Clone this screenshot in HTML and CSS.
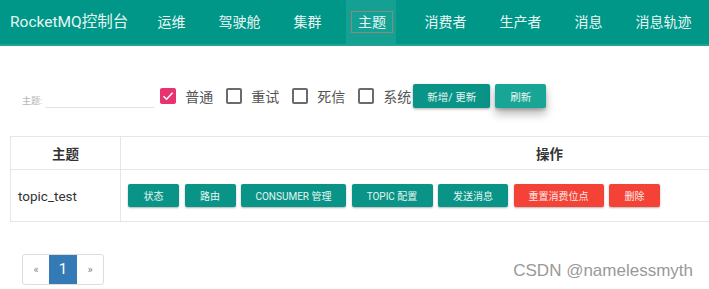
FILE: index.html
```html
<!DOCTYPE html>
<html lang="zh">
<head>
<meta charset="utf-8">
<link rel="stylesheet" href="styles.css">
</head>
<body>
<header class="topbar">
  <div class="brand">RocketMQ控制台</div>
  <nav class="nav">
    <a class="nav-item">运维</a>
    <a class="nav-item">驾驶舱</a>
    <a class="nav-item">集群</a>
    <a class="nav-item active"><span class="focus">主题</span></a>
    <a class="nav-item">消费者</a>
    <a class="nav-item">生产者</a>
    <a class="nav-item">消息</a>
    <a class="nav-item">消息轨迹</a>
  </nav>
</header>
<main class="content">
  <div class="filters">
    <label class="field">
      <span class="field-label">主题:</span>
      <span class="field-input"></span>
    </label>
    <span class="check checked"><span class="box"><svg viewBox="0 0 16 16" width="16" height="16"><path d="M3.5 8.2 L6.6 11.2 L12.6 4.8" fill="none" stroke="#fff" stroke-width="1.6"/></svg></span>普通</span>
    <span class="check"><span class="box"></span>重试</span>
    <span class="check"><span class="box"></span>死信</span>
    <span class="check"><span class="box"></span>系统</span>
    <button class="btn btn-add">新增/ 更新</button>
    <button class="btn btn-refresh">刷新</button>
  </div>
  <div class="table-wrap">
    <table class="grid">
      <thead>
        <tr><th class="col-topic">主题</th><th class="col-ops">操作</th></tr>
      </thead>
      <tbody>
        <tr>
          <td class="topic-name">topic_test</td>
          <td>
            <div class="ops">
              <button class="btn btn-sm w51">状态</button>
              <button class="btn btn-sm w51">路由</button>
              <button class="btn btn-sm w105">CONSUMER 管理</button>
              <button class="btn btn-sm w81">TOPIC 配置</button>
              <button class="btn btn-sm w70">发送消息</button>
              <button class="btn btn-sm btn-red w90">重置消费位点</button>
              <button class="btn btn-sm btn-red w51">删除</button>
            </div>
          </td>
        </tr>
      </tbody>
    </table>
  </div>
  <div class="footer">
    <ul class="pager">
      <li class="page">«</li>
      <li class="page current">1</li>
      <li class="page">»</li>
    </ul>
    <div class="watermark">CSDN @namelessmyth</div>
  </div>
</main>
</body>
</html>
```
FILE: styles.css
```css
html, body {
  margin: 0;
  padding: 0;
  overflow: hidden;
  background: #fff;
}
body {
  width: 709px;
  height: 289px;
  font-family: Roboto, "Noto Sans CJK SC", sans-serif;
  color: #333;
}
.topbar {
  height: 44px;
  background: #009688;
  border-bottom: 2px solid #21a396;
  display: flex;
  align-items: stretch;
  white-space: nowrap;
}
.brand {
  flex-shrink: 0;
  padding-left: 10px;
  width: 131px;
  font-size: 15.5px;
  line-height: 44px;
  color: #e6f6f3;
}
.nav {
  display: flex;
  flex-shrink: 0;
}
.nav-item {
  flex-shrink: 0;
  padding: 0 16.5px;
  font-size: 14px;
  line-height: 44px;
  color: #e9f7f5;
  display: flex;
  align-items: center;
}
.nav-item.active {
  background: #14a194;
  padding: 0 4px 0 6px;
  margin: 0 12px 0 8px;
}
.focus {
  display: inline-block;
  line-height: 20px;
  padding: 0 6px;
  outline: 1px solid #8b8a80;
}
.content {
  padding: 0 0 0 10px;
}
.filters {
  display: flex;
  align-items: center;
  height: 24px;
  margin-top: 38px;
  white-space: nowrap;
}
.field {
  display: flex;
  align-items: flex-end;
  height: 24px;
  margin-left: 12px;
}
.field-label {
  font-size: 9px;
  color: #b5b5b5;
  margin-right: 3px;
  line-height: 12px;
  padding-bottom: 1px;
}
.field-input {
  width: 109px;
  border-bottom: 1px solid #e2e2e2;
  height: 13px;
}
.check {
  display: flex;
  align-items: center;
  font-size: 14px;
  color: #555;
}
.field + .check { margin-left: 6px; }
.check + .check { margin-left: 13px; }
.box {
  width: 16px;
  height: 16px;
  box-sizing: border-box;
  border: 2px solid #6b6b6b;
  border-radius: 2px;
  margin-right: 9px;
  display: flex;
  align-items: center;
  justify-content: center;
}
.check.checked .box {
  background: #e8336f;
  border: none;
}
.btn {
  border: none;
  color: #e5f5f2;
  font-family: Roboto, "Noto Sans CJK SC", sans-serif;
  cursor: pointer;
  white-space: nowrap;
}
.btn-add {
  margin-left: 2px;
  width: 77px;
  height: 24px;
  font-size: 10.5px;
  background: #0a9487;
  border-radius: 2px;
  box-shadow: 0 1px 3px rgba(0,0,0,0.35);
}
.btn-refresh {
  margin-left: 5px;
  width: 51px;
  height: 24px;
  font-size: 10.5px;
  background: #18a596;
  border-radius: 2px;
  box-shadow: 0 6px 10px rgba(0,0,0,0.28), 0 2px 3px rgba(0,0,0,0.18);
}
.table-wrap {
  margin-top: 28px;
}
.grid {
  border-collapse: collapse;
  width: 969px;
  border: 1px solid #ddd;
}
.grid th, .grid td {
  border: 1px solid #e6e6e6;
  padding: 0;
}
.grid th {
  height: 32px;
  font-size: 13.5px;
  font-weight: bold;
  color: #333;
}
.col-topic { width: 109px; }
.grid td { height: 51px; }
.topic-name {
  font-size: 13.5px;
  padding-left: 7px !important;
  color: #333;
}
.ops {
  display: flex;
  gap: 5.5px;
  padding-left: 7px;
}
.btn-sm {
  height: 23px;
  font-size: 10px;
  background: #0a9487;
  border-radius: 2px;
  box-shadow: 0 1px 2px rgba(0,0,0,0.3);
  padding: 0;
}
.btn-red { background: #f44336; color: #fde8e6; }
.w51 { width: 51px; }
.w105 { width: 105px; }
.w81 { width: 81px; }
.w70 { width: 70px; }
.w90 { width: 90px; }
.footer {
  display: flex;
  align-items: center;
  justify-content: space-between;
  margin-top: 32px;
  padding-left: 12px;
  padding-right: 16px;
}
.pager {
  list-style: none;
  margin: 0;
  padding: 0;
  display: flex;
  border: 1px solid #ddd;
  border-radius: 3px;
  height: 29px;
}
.page {
  width: 26px;
  line-height: 29px;
  text-align: center;
  font-size: 11px;
  color: #888;
}
.page.current {
  width: 28px;
  background: #337ab7;
  color: #fff;
  font-size: 15px;
}
.watermark {
  font-family: "Liberation Sans", Arial, sans-serif;
  font-size: 17px;
  color: #999;
  margin-top: 3px;
}
```
